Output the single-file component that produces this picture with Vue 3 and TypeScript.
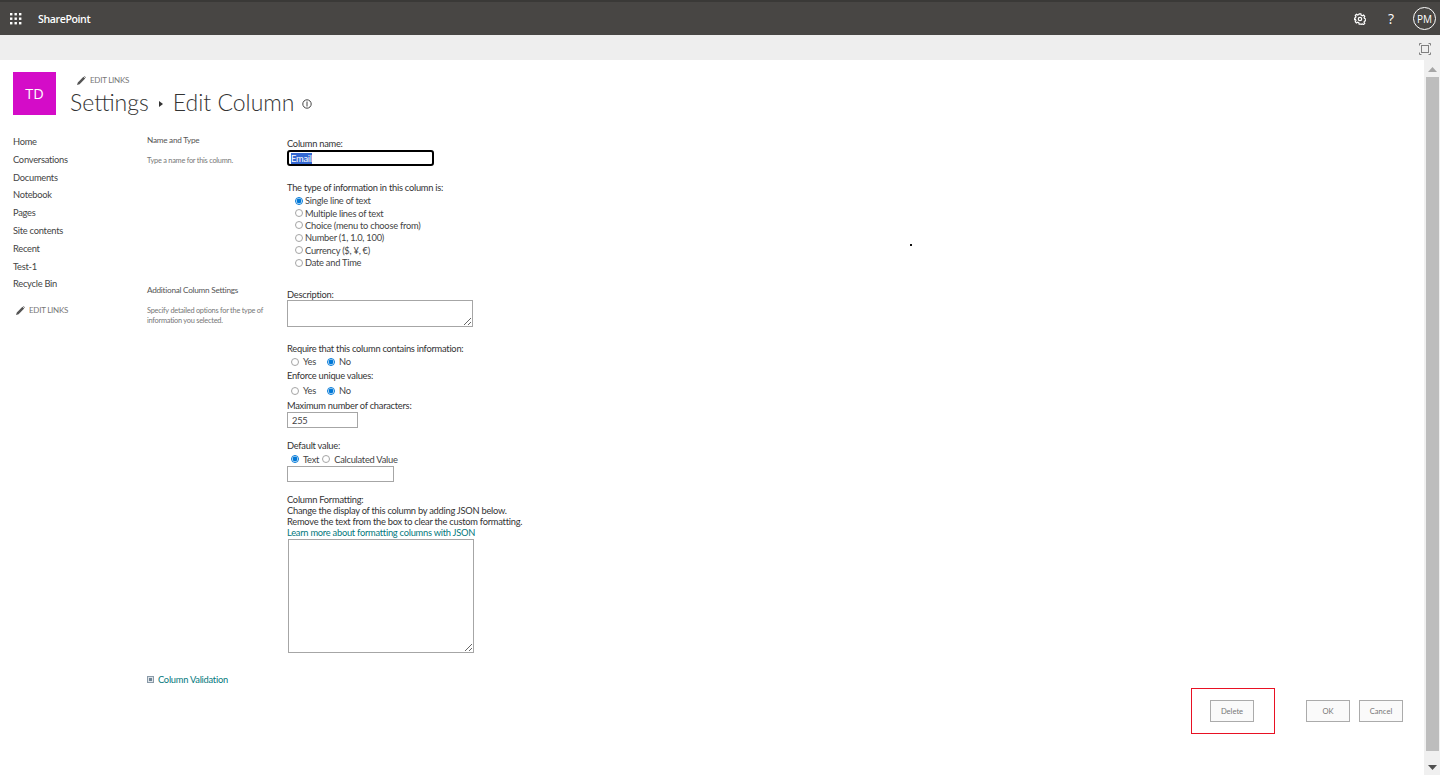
<script setup lang="ts">
import { onMounted, ref } from 'vue'

const nav: string[] = ['Home', 'Conversations', 'Documents', 'Notebook', 'Pages', 'Site contents', 'Recent', 'Test-1', 'Recycle Bin']
const types: string[] = ['Single line of text', 'Multiple lines of text', 'Choice (menu to choose from)', 'Number (1, 1.0, 100)', 'Currency ($, ¥, €)', 'Date and Time']
const nameInput = ref<HTMLInputElement | null>(null)

onMounted(() => {
  nameInput.value?.focus()
  nameInput.value?.select()
})
</script>

<template>
  <div class="page">
    <header class="suite">
      <svg class="waffle" width="12" height="12" viewBox="0 0 12 12" fill="#fff">
        <rect v-for="n in 9" :key="n" :x="((n - 1) % 3) * 4.5" :y="Math.floor((n - 1) / 3) * 4.5" width="2.4" height="2.4" />
      </svg>
      <span class="brand">SharePoint</span>
      <span class="suite-spacer"></span>
      <svg class="gear" width="12" height="12" viewBox="0 0 14 14" fill="none" stroke="#fff" stroke-width="1.4">
        <circle cx="7" cy="7" r="2" />
        <path d="M6 1h2l.4 1.6 1.3.6 1.5-.8 1.3 1.4-.8 1.4.6 1.3 1.4.5v2l-1.4.4-.6 1.3.8 1.5-1.4 1.3-1.4-.8-1.3.6L8 13H6l-.4-1.6-1.3-.6-1.5.8-1.3-1.4.8-1.4-.6-1.3L.3 8V6l1.4-.4.6-1.3-.8-1.5 1.4-1.3 1.4.8 1.3-.6z" />
      </svg>
      <span class="help">?</span>
      <span class="avatar">PM</span>
    </header>

    <div class="ribbon">
      <svg width="12" height="12" viewBox="0 0 12 12" fill="none" stroke="#808080" stroke-width="1">
        <rect x="2.5" y="2.5" width="7" height="7" />
        <path d="M.5 2.500v-2h2M9.500.5h2v2M11.500 9.500v2h-2M2.500 11.500h-2v-2" />
      </svg>
    </div>

    <div class="workspace">
      <main class="content">
        <span class="stray-dot"></span>
        <section class="title-row">
          <div class="logo">TD</div>
          <div class="title-text">
            <a class="edit-links top-links">
              <svg width="9" height="9" viewBox="0 0 9 9" fill="#555"><path d="M0 9l.8-2.600L6.400.8l1.800 1.800-5.600 5.600zM7 .3l.5-.3 1.500 1.500-.3.5z" /></svg>
              EDIT LINKS
            </a>
            <h1>
              <span>Settings</span>
              <svg class="crumb" width="4" height="6" viewBox="0 0 4 6" fill="#333"><path d="M0 0l4 3-4 3z" /></svg>
              <span>Edit Column</span>
              <svg class="info" width="10" height="10" viewBox="0 0 10 10" fill="none" stroke="#444"><circle cx="5" cy="5" r="4.200" /><path d="M5 2.500v5" /></svg>
            </h1>
          </div>
        </section>

        <section class="body">
          <nav class="side">
            <a v-for="item in nav" :key="item" class="side-item">{{ item }}</a>
            <a class="edit-links side-links">
              <svg width="9" height="9" viewBox="0 0 9 9" fill="#555"><path d="M0 9l.8-2.600L6.400.8l1.800 1.800-5.600 5.600zM7 .3l.5-.3 1.500 1.500-.3.5z" /></svg>
              EDIT LINKS
            </a>
          </nav>

          <form class="form" @submit.prevent>
            <div class="group group-one">
              <div class="group-info">
                <h3>Name and Type</h3>
                <p>Type a name for this column.</p>
              </div>
              <div class="fields">
                <label class="line">Column name:</label>
                <input ref="nameInput" class="name-input" type="text" value="Email" />
                <div class="line type-head">The type of information in this column is:</div>
                <label v-for="(t, i) in types" :key="t" class="type-row">
                  <input type="radio" name="ctype" :checked="i === 0" />
                  <span>{{ t }}</span>
                </label>
              </div>
            </div>

            <div class="group group-two">
              <div class="group-info">
                <h3>Additional Column Settings</h3>
                <p>Specify detailed options for the type of information you selected.</p>
              </div>
              <div class="fields">
                <label class="line">Description:</label>
                <textarea class="desc"></textarea>

                <div class="line require">Require that this column contains information:</div>
                <div class="choice">
                  <label class="yes"><input type="radio" name="req" /><span>Yes</span></label>
                  <label class="no"><input type="radio" name="req" checked /><span>No</span></label>
                </div>
                <div class="line enforce">Enforce unique values:</div>
                <div class="choice">
                  <label class="yes"><input type="radio" name="uni" /><span>Yes</span></label>
                  <label class="no"><input type="radio" name="uni" checked /><span>No</span></label>
                </div>
                <label class="line maxlen">Maximum number of characters:</label>
                <input class="text-box max-input" type="text" value="255" />

                <div class="line default-head">Default value:</div>
                <div class="choice default-choice">
                  <label><input type="radio" name="def" checked /><span>Text</span></label>
                  <label class="calc"><input type="radio" name="def" /><span>Calculated Value</span></label>
                </div>
                <input class="text-box default-input" type="text" />

                <div class="line format-head">Column Formatting:</div>
                <div class="line">Change the display of this column by adding JSON below.</div>
                <div class="line">Remove the text from the box to clear the custom formatting.</div>
                <a class="line link">Learn more about formatting columns with JSON</a>
                <textarea class="json"></textarea>
              </div>
            </div>

            <div class="validation">
              <svg width="7" height="7" viewBox="0 0 7 7"><rect x=".5" y=".5" width="6" height="6" fill="#dfe4e8" stroke="#8a9aa8" /><rect x="2" y="2" width="3" height="3" fill="#6f8496" /></svg>
              <span>Column Validation</span>
            </div>

            <div class="actions">
              <div class="delete-mark"><button type="button" class="btn">Delete</button></div>
              <button type="button" class="btn ok">OK</button>
              <button type="button" class="btn">Cancel</button>
            </div>
          </form>
        </section>
      </main>

      <aside class="scrollbar">
        <svg class="arrow" width="9" height="5" viewBox="0 0 9 5" fill="#a6a6a6"><path d="M4.500 0L9 5H0z" /></svg>
        <div class="thumb"></div>
        <svg class="arrow" width="9" height="5" viewBox="0 0 9 5" fill="#505050"><path d="M0 0h9L4.500 5z" /></svg>
      </aside>
    </div>
  </div>
</template>

<style>
html, body { margin: 0; overflow: hidden; background: #fff; }
</style>

<style scoped>
.page {
  height: 775px;
  display: flex;
  flex-direction: column;
  font-family: "Lato", "Open Sans", sans-serif;
  font-size: 9.3px;
  letter-spacing: -0.25px;
  color: #444;
  overflow: hidden;
}
.suite {
  height: 33px;
  flex: none;
  border-top: 2px solid #3a3937;
  background: #484644;
  display: flex;
  align-items: center;
  padding: 0 12px 0 10px;
  color: #fff;
  letter-spacing: 0;
}
.brand { margin-left: 16px; font-family: "Open Sans", sans-serif; font-size: 10.6px; font-weight: 600; letter-spacing: -0.4px; }
.suite-spacer { flex: 1; }
.gear { margin-right: 20px; }
.help { font-family: "Open Sans", sans-serif; font-size: 14px; width: 10px; text-align: center; margin-right: 17px; font-weight: 400; }
.avatar {
  width: 23px;
  height: 23px;
  box-sizing: border-box;
  border: 1px solid #fff;
  border-radius: 50%;
  display: flex;
  align-items: center;
  justify-content: center;
  font-family: "Open Sans", sans-serif;
  font-size: 10px;
  font-weight: 400;
  margin-right: -8px;
}
.ribbon {
  height: 25px;
  flex: none;
  background: #eeeeee;
  display: flex;
  align-items: center;
  justify-content: flex-end;
  padding: 2px 9px 0 0;
  box-sizing: border-box;
}
.workspace { flex: 1; display: flex; min-height: 0; }
.content { flex: 1; min-width: 0; position: relative; }
.stray-dot { position: absolute; left: 910px; top: 184px; width: 2px; height: 2px; background: #111; }
.title-row { display: flex; padding: 12px 0 0 13px; height: 62px; box-sizing: content-box; }
.logo {
  width: 43px;
  height: 43px;
  background: #d40cc8;
  color: #fff;
  font-family: "Open Sans", sans-serif;
  font-size: 14.5px;
  letter-spacing: 0;
  display: flex;
  align-items: center;
  justify-content: center;
}
.title-text { margin-left: 14px; }
.edit-links { display: flex; align-items: center; gap: 4px; font-size: 8px; color: #777; }
.top-links { margin: 3px 0 0 7px; height: 10px; }
h1 {
  margin: 3px 0 0;
  height: 28px;
  display: flex;
  align-items: center;
  font-family: "Lato", "Open Sans", sans-serif;
  font-weight: 300;
  font-size: 23px;
  letter-spacing: 0;
  line-height: 28px;
  color: #333;
}
.crumb { margin: 3px 10px 0 10px; }
.info { margin: 3px 0 0 7px; }
.body { display: flex; }
.side { width: 147px; flex: none; margin-top: -1px; padding-left: 13px; box-sizing: border-box; }
.side-item { display: block; height: 17.8px; line-height: 17.8px; font-size: 9.3px; color: #444; }
.side-links { margin: 12px 0 0 3px; height: 10px; }
.form { flex: 1; min-width: 0; }
.group { display: flex; }
.group-one { height: 150px; }
.group-info { width: 140px; flex: none; padding-right: 12px; box-sizing: border-box; }
.group-info h3 { margin: 0; font-size: 8.2px; line-height: 12px; font-weight: 400; color: #555; }
.group-info p { margin: 10px 0 0; font-size: 7.4px; line-height: 10px; color: #777; }
.fields { flex: 1; display: flex; flex-direction: column; align-items: flex-start; }
.group-one .fields { padding-top: 4px; }
.group-two .fields { padding-top: 5px; }
.line { display: block; height: 11px; line-height: 11px; color: #333; white-space: nowrap; font-size: 9.3px; }
.name-input {
  width: 147px;
  height: 16px;
  box-sizing: border-box;
  margin: 1px 0 0;
  border: 2px solid #000;
  border-radius: 3px;
  outline: none;
  padding: 0 2px;
  font: inherit;
  letter-spacing: inherit;
  color: #333;
}
.name-input::selection { background: #3367d1; color: #fff; }
.type-head { margin-top: 16px; margin-bottom: 1.5px; }
.type-row { display: flex; align-items: center; height: 12.4px; margin-left: 8px; color: #444; white-space: nowrap; }
input[type="radio"] { width: 8px; height: 8px; margin: 0; flex: none; accent-color: #0078d7; }
input[type="radio"]:not(:checked) { opacity: 0.65; }
.type-row span { margin-left: 2px; }
.desc {
  width: 186px;
  height: 27px;
  box-sizing: border-box;
  margin: 0;
  border: 1px solid #a6a6a6;
  padding: 0;
  outline: none;
  display: block;
}
.require { margin-top: 16px; }
.choice { display: flex; height: 15px; align-items: center; padding-left: 4px; color: #444; }
.choice label { display: flex; align-items: center; gap: 4px; }
.choice .yes { width: 36px; }
.enforce { margin: 1px 0 2px; }
.maxlen { margin: 2px 0 1px; }
.text-box {
  box-sizing: border-box;
  height: 16px;
  margin: 0;
  border: 1px solid #a6a6a6;
  padding: 0 4px;
  outline: none;
  font: inherit;
  letter-spacing: inherit;
  color: #444;
}
.max-input { width: 71px; }
.default-head { margin-top: 12px; }
.default-choice { height: 14px; margin-top: 1px; }
.default-choice .calc { margin-left: 3px; }
.default-input { width: 107px; }
.format-head { margin-top: 12px; }
.link { color: #03787c; }
.json {
  width: 186px;
  height: 114px;
  box-sizing: border-box;
  margin: 1px 0 0 1px;
  border: 1px solid #a6a6a6;
  outline: none;
  display: block;
}
.validation { display: flex; align-items: center; gap: 4px; margin-top: 20px; height: 12px; color: #03787c; }
.actions { display: flex; align-items: flex-start; justify-content: flex-end; padding-right: 21px; margin-top: 3px; }
.delete-mark {
  width: 84px;
  height: 46px;
  box-sizing: border-box;
  border: 1px solid #e81123;
  padding: 11px 0 0 18px;
  margin-right: 31px;
}
.btn {
  width: 44px;
  height: 22px;
  box-sizing: border-box;
  margin: 12px 0 0 9px;
  padding: 0;
  border: 1px solid #ababab;
  background: #fafafa;
  font-family: inherit;
  font-size: 7.6px;
  color: #777;
}
.delete-mark .btn { margin: 0; }
.ok { margin-left: 0; }
.scrollbar {
  width: 16px;
  flex: none;
  background: #f0f0f0;
  display: flex;
  flex-direction: column;
  align-items: center;
  padding-top: 7px;
  box-sizing: border-box;
}
.thumb { width: 13px; height: 674px; margin-top: 5px; background: #bdbdbd; }
.arrow { flex: none; }
.thumb + .arrow { margin-top: 14px; }
</style>
